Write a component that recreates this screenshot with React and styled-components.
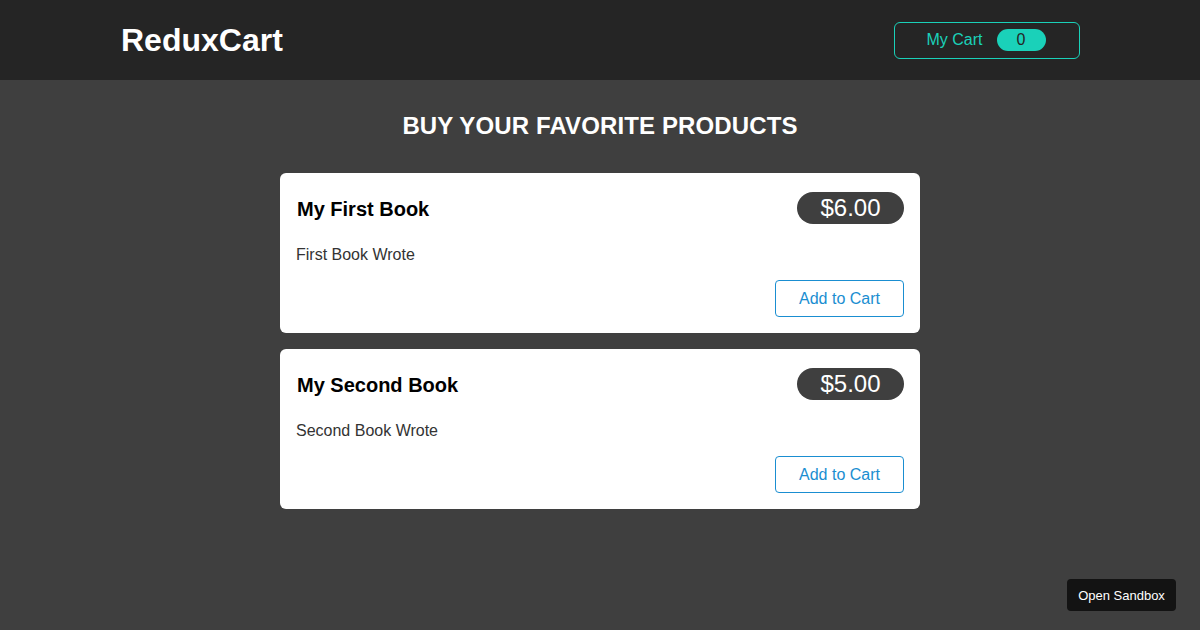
import React, { useState } from 'react';
import styled, { createGlobalStyle } from 'styled-components';

const GlobalStyle = createGlobalStyle`
  * { box-sizing: border-box; }
  html, body {
    margin: 0;
    padding: 0;
    background-color: #3f3f3f;
    font-family: "Liberation Sans", Arial, sans-serif;
  }
`;

// Header
const Header = styled.header`
  height: 80px;
  background-color: #252525;
`;

const HeaderInner = styled.div`
  width: 960px;
  height: 100%;
  margin: 0 auto;
  display: flex;
  align-items: center;
  justify-content: space-between;
`;

const Logo = styled.h1`
  margin: 0 0 0 1px;
  color: #fff;
  font-size: 32px;
  font-weight: 700;
`;

const CartButton = styled.button`
  width: 186px;
  height: 37px;
  display: flex;
  align-items: center;
  justify-content: center;
  gap: 14px;
  padding: 0 2px 0 0;
  background: transparent;
  border: 1px solid #1ad1b9;
  border-radius: 6px;
  color: #1ad1b9;
  font-family: inherit;
  font-size: 16px;
  cursor: pointer;
`;

const Badge = styled.span`
  width: 49px;
  height: 22px;
  display: flex;
  align-items: center;
  justify-content: center;
  border-radius: 12px;
  background-color: #1ad1b9;
  color: #252525;
  font-size: 16px;
`;

// Main
const Main = styled.main`
  width: 640px;
  margin: 0 auto;
  padding-top: 32px;
`;

const Title = styled.h2`
  margin: 0 0 33px;
  text-align: center;
  color: #fff;
  font-size: 24px;
  line-height: 28px;
  letter-spacing: 0.12px;
  font-weight: 700;
  text-transform: uppercase;
`;

const List = styled.ul`
  list-style: none;
  margin: 0;
  padding: 0;
  display: flex;
  flex-direction: column;
  gap: 16px;
`;

const Card = styled.li`
  background-color: #fff;
  border-radius: 6px;
  padding: 16px;
`;

const CardHeader = styled.div`
  height: 38px;
  display: flex;
  align-items: center;
  justify-content: space-between;
`;

const CardTitle = styled.h3`
  margin: 2px 0 0 1px;
  font-size: 20px;
  font-weight: 700;
  color: #000;
`;

const Price = styled.span`
  min-width: 107px;
  height: 32px;
  padding: 0 16px;
  display: flex;
  align-items: center;
  justify-content: center;
  border-radius: 16px;
  background-color: #3f3f3f;
  color: #fff;
  font-size: 24px;
`;

const Description = styled.p`
  margin: 19px 0 16px;
  color: #333;
  font-size: 16px;
  line-height: 18px;
`;

const Actions = styled.div`
  display: flex;
  justify-content: flex-end;
`;

const AddButton = styled.button`
  width: 129px;
  height: 37px;
  background: #fff;
  border: 1px solid #1a8ed1;
  border-radius: 4px;
  color: #1a8ed1;
  font-family: inherit;
  font-size: 16px;
  cursor: pointer;

  &:hover {
    background-color: #eef7fd;
  }
`;

const SandboxButton = styled.a`
  position: fixed;
  right: 24px;
  bottom: 19px;
  width: 109px;
  height: 32px;
  display: flex;
  align-items: center;
  justify-content: center;
  background-color: #131313;
  border-radius: 4px;
  color: #fff;
  font-size: 13px;
  text-decoration: none;
`;

const products = [
  { id: 'p1', title: 'My First Book', price: 6, description: 'First Book Wrote' },
  { id: 'p2', title: 'My Second Book', price: 5, description: 'Second Book Wrote' },
];

const App = () => {
  const [count, setCount] = useState(0);

  return (
    <>
      <GlobalStyle />
      <Header>
        <HeaderInner>
          <Logo>ReduxCart</Logo>
          <CartButton>
            <span>My Cart</span>
            <Badge>{count}</Badge>
          </CartButton>
        </HeaderInner>
      </Header>
      <Main>
        <Title>Buy your favorite products</Title>
        <List>
          {products.map((p) => (
            <Card key={p.id}>
              <CardHeader>
                <CardTitle>{p.title}</CardTitle>
                <Price>${p.price.toFixed(2)}</Price>
              </CardHeader>
              <Description>{p.description}</Description>
              <Actions>
                <AddButton onClick={() => setCount(count + 1)}>Add to Cart</AddButton>
              </Actions>
            </Card>
          ))}
        </List>
      </Main>
      <SandboxButton href="#">Open Sandbox</SandboxButton>
    </>
  );
};

export default App;
